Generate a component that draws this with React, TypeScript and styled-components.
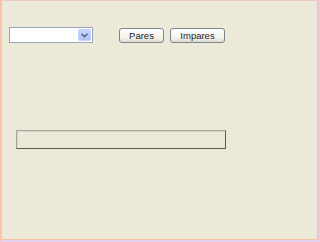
import React from "react";
import styled, { createGlobalStyle } from "styled-components";

const Global = createGlobalStyle`
  html, body { margin: 0; padding: 0; background: #ECE9D8; }
  * { box-sizing: border-box; }
`;

const Frame = styled.div`
  width: 320px;
  height: 242px;
  background: #ECE9D8;
  border-top: 1px solid #f3c6c6;
  border-left: 2px solid #f7c3a9;
  border-right: 2px solid #f2c8d8;
  border-bottom: 2px solid #e6d0f0;
  box-shadow: inset -1px 0 0 #f6c2a6, inset 0 -1px 0 #f6c2a6;
  padding: 26px 0 0 7px;
  font-family: "Liberation Sans", Arial, sans-serif;
  font-size: 10px;
  display: flex;
  flex-direction: column;
`;

const Row = styled.div`
  display: flex;
  align-items: center;
`;

const Select = styled.div`
  width: 84px;
  height: 16px;
  background: #fff;
  border: 1px solid #98a6b8;
  display: flex;
  justify-content: flex-end;
  padding: 1px;
  margin-right: 26px;
`;

const DropBtn = styled.div`
  width: 13px;
  height: 12px;
  background: linear-gradient(#c6d6fb, #b0c5f5);
  border: 1px solid #c3d3fd;
  border-radius: 1px;
  display: flex;
  align-items: center;
  justify-content: center;
`;

const Button = styled.button<{ $w: number }>`
  width: ${(p) => p.$w}px;
  height: 15px;
  margin-right: 6px;
  padding: 0;
  border: 1px solid #7b8591;
  border-radius: 3px;
  background: linear-gradient(#ffffff, #f2f1ea 70%, #dcd9cd);
  font-family: "Liberation Sans", Arial, sans-serif;
  font-size: 9.5px;
  color: #222;
  line-height: 13px;
`;

const TextBox = styled.div`
  width: 210px;
  height: 19px;
  margin-top: 87px;
  margin-left: 7px;
  border-top: 1px solid #a7a69a;
  border-left: 1px solid #a7a69a;
  border-right: 1px solid #5a5a4e;
  border-bottom: 1px solid #5a5a4e;
  box-shadow: inset 0 1px 0 #d8d5c6, inset 1px 0 0 #d8d5c6;
  background: #ECE9D8;
`;

export default function App() {
  return (
    <>
      <Global />
      <Frame>
        <Row>
          <Select>
            <DropBtn>
              <svg width="7" height="5" viewBox="0 0 7 5">
                <path d="M0.5 0.8 L3.5 3.8 L6.5 0.8" fill="none" stroke="#4d6185" strokeWidth="1.5" />
              </svg>
            </DropBtn>
          </Select>
          <Button $w={45}>Pares</Button>
          <Button $w={55}>Impares</Button>
        </Row>
        <TextBox />
      </Frame>
    </>
  );
}
